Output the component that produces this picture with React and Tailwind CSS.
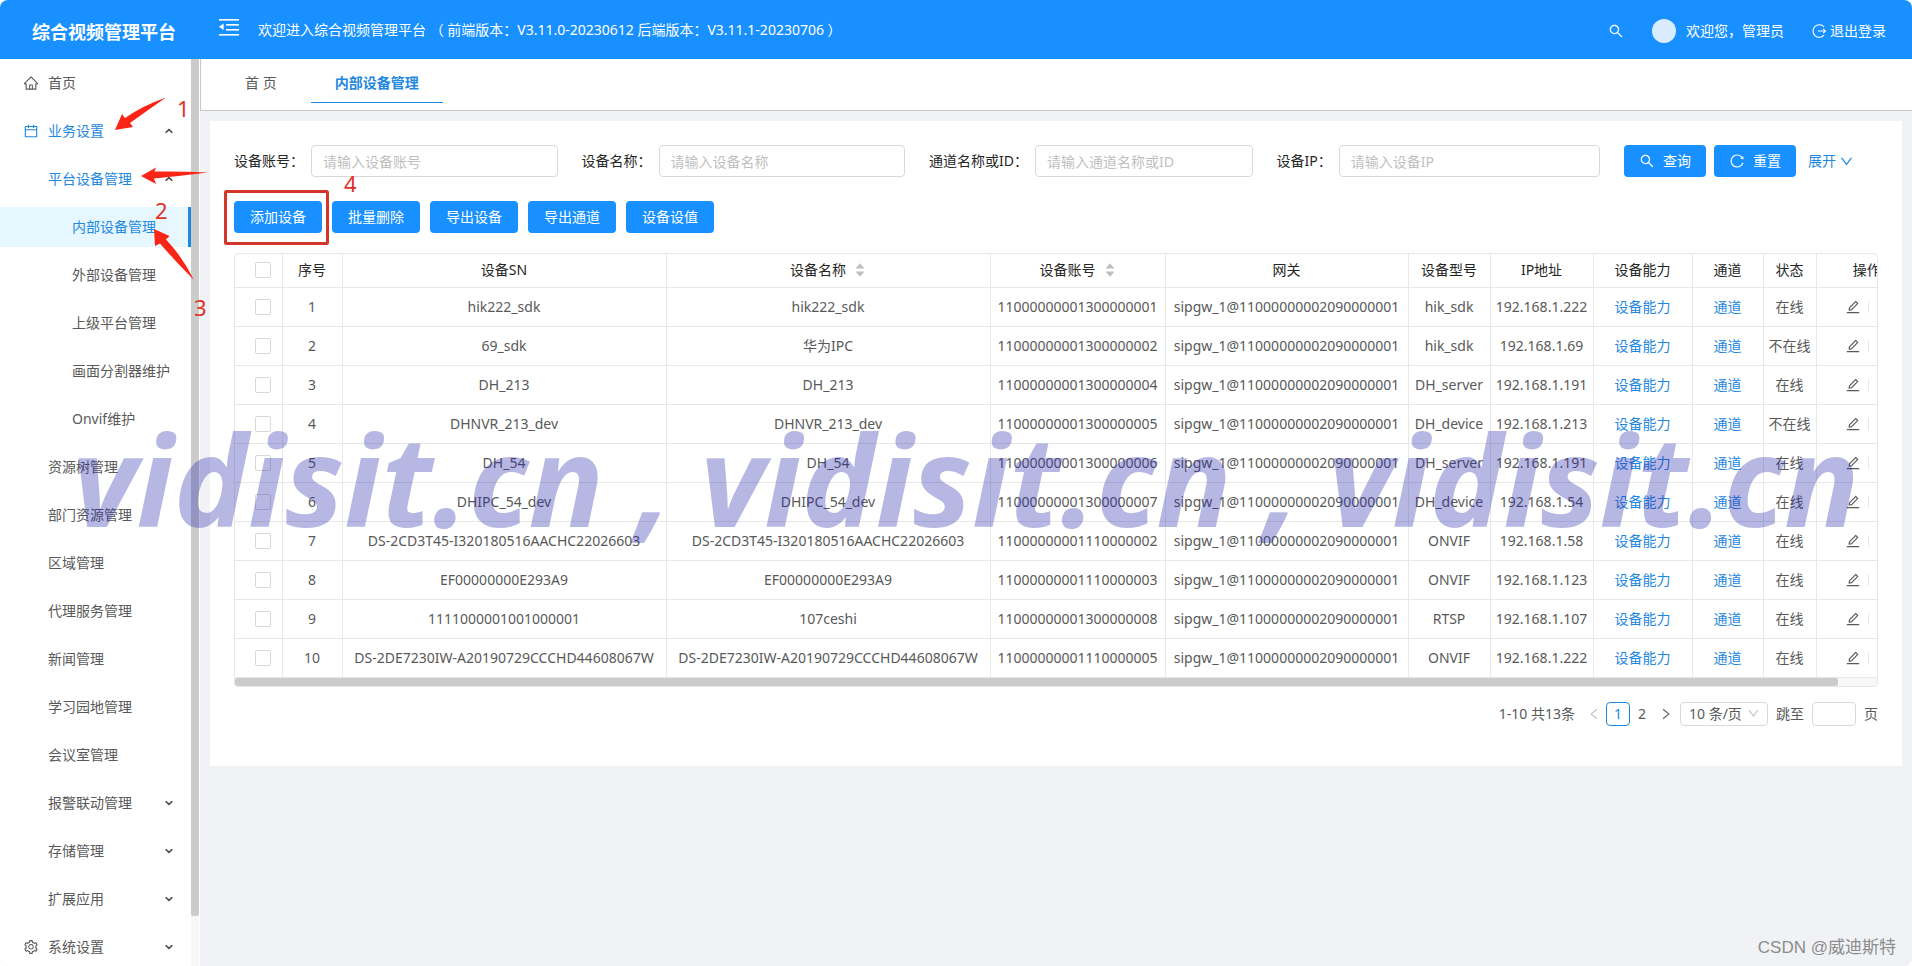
import { useState } from 'react';
import {
  AiOutlineHome,
  AiOutlineCalendar,
  AiOutlineSetting,
  AiOutlineSearch,
  AiOutlineReload,
  AiOutlineDown,
  AiOutlineLeft,
  AiOutlineRight,
  AiOutlineEdit,
  AiFillCaretUp,
  AiFillCaretDown
} from 'react-icons/ai';

const MENU = [
  { label: '首页', icon: AiOutlineHome },
  { label: '业务设置', icon: AiOutlineCalendar, arrow: 'up', open: true },
  { label: '平台设备管理', arrow: 'up', open: true },
  { label: '内部设备管理', level: 2, active: true },
  { label: '外部设备管理', level: 2 },
  { label: '上级平台管理', level: 2 },
  { label: '画面分割器维护', level: 2 },
  { label: 'Onvif维护', level: 2 },
  { label: '资源树管理' },
  { label: '部门资源管理' },
  { label: '区域管理' },
  { label: '代理服务管理' },
  { label: '新闻管理' },
  { label: '学习园地管理' },
  { label: '会议室管理' },
  { label: '报警联动管理', arrow: 'down' },
  { label: '存储管理', arrow: 'down' },
  { label: '扩展应用', arrow: 'down' },
  { label: '系统设置', icon: AiOutlineSetting, arrow: 'down' }
];

const FIELDS = [
  { id: 'account', label: '设备账号：', placeholder: '请输入设备账号' },
  { id: 'name', label: '设备名称：', placeholder: '请输入设备名称' },
  { id: 'channel', label: '通道名称或ID：', placeholder: '请输入通道名称或ID' },
  { id: 'ip', label: '设备IP：', placeholder: '请输入设备IP' }
];

const ACTIONS = ['添加设备', '批量删除', '导出设备', '导出通道', '设备设值'];

const GATEWAY = 'sipgw_1@11000000002090000001';

const ROWS = [
  { sn: 'hik222_sdk', name: 'hik222_sdk', account: '11000000001300000001', type: 'hik_sdk', ip: '192.168.1.222', status: '在线' },
  { sn: '69_sdk', name: '华为IPC', account: '11000000001300000002', type: 'hik_sdk', ip: '192.168.1.69', status: '不在线' },
  { sn: 'DH_213', name: 'DH_213', account: '11000000001300000004', type: 'DH_server', ip: '192.168.1.191', status: '在线' },
  { sn: 'DHNVR_213_dev', name: 'DHNVR_213_dev', account: '11000000001300000005', type: 'DH_device', ip: '192.168.1.213', status: '不在线' },
  { sn: 'DH_54', name: 'DH_54', account: '11000000001300000006', type: 'DH_server', ip: '192.168.1.191', status: '在线' },
  { sn: 'DHIPC_54_dev', name: 'DHIPC_54_dev', account: '11000000001300000007', type: 'DH_device', ip: '192.168.1.54', status: '在线' },
  { sn: 'DS-2CD3T45-I320180516AACHC22026603', name: 'DS-2CD3T45-I320180516AACHC22026603', account: '11000000001110000002', type: 'ONVIF', ip: '192.168.1.58', status: '在线' },
  { sn: 'EF00000000E293A9', name: 'EF00000000E293A9', account: '11000000001110000003', type: 'ONVIF', ip: '192.168.1.123', status: '在线' },
  { sn: '1111000001001000001', name: '107ceshi', account: '11000000001300000008', type: 'RTSP', ip: '192.168.1.107', status: '在线' },
  { sn: 'DS-2DE7230IW-A20190729CCCHD44608067W', name: 'DS-2DE7230IW-A20190729CCCHD44608067W', account: '11000000001110000005', type: 'ONVIF', ip: '192.168.1.222', status: '在线' }
];

function FoldIcon() {
  return (
    <svg width="20" height="20" viewBox="0 0 20 20" fill="#fff" aria-hidden="true">
      <rect x="0" y="1" width="20" height="1.6" />
      <rect x="7" y="6" width="13" height="1.6" />
      <rect x="7" y="11" width="13" height="1.6" />
      <rect x="0" y="16" width="20" height="1.6" />
      <path d="M4.6 5.6v6.4L0 8.8z" />
    </svg>
  );
}

function LogoutIcon() {
  return (
    <svg width="14" height="14" viewBox="0 0 14 14" fill="none" stroke="#fff" strokeWidth="1.1" aria-hidden="true">
      <path d="M12 2.8A6.3 6.3 0 1 0 12 11.2M6 7h7.2M11.2 4.9L13.4 7l-2.2 2.1" />
    </svg>
  );
}

function MenuArrow({ dir }) {
  return (
    <svg width="8" height="6" viewBox="0 0 8 6" fill="none" stroke="#4a4a4a" strokeWidth="1.6" aria-hidden="true">
      <path d={dir === 'up' ? 'M0.7 4.8L4 1.6L7.3 4.8' : 'M0.7 1.2L4 4.4L7.3 1.2'} />
    </svg>
  );
}

function Sorter() {
  return (
    <span className="ml-2 inline-flex flex-col text-[#bfbfbf]">
      <AiFillCaretUp size={12} className="-mb-1" />
      <AiFillCaretDown size={12} />
    </span>
  );
}

function Sidebar() {
  return (
    <aside className="flex w-[200px] shrink-0 overflow-hidden bg-white">
      <nav className="min-w-0 flex-1 pt-1">
        {MENU.map((item) => (
          <a
            key={item.label}
            href="#"
            className={`mb-2 flex h-10 items-center pr-[18px] ${
              item.active ? 'border-r-3 border-[#1f88e0] bg-[#e6f7ff] text-[#1f88e0]' : item.open ? 'text-[#1f88e0]' : 'text-[#595959]'
            } ${item.level === 2 ? 'pl-[72px]' : item.icon ? 'pl-[23px]' : 'pl-12'}`}
          >
            {item.icon && <item.icon size={16} className="mr-[9px]" />}
            <span className="flex-1 whitespace-nowrap">{item.label}</span>
            {item.arrow && <MenuArrow dir={item.arrow} />}
          </a>
        ))}
      </nav>
      <div className="w-2 bg-[#f7f7f7]">
        <div className="h-[857px] rounded-b-xs bg-[#cbcbcb]" />
      </div>
      <div className="w-px bg-white" />
    </aside>
  );
}

function SearchForm() {
  return (
    <form className="-mx-3 flex" onSubmit={(e) => e.preventDefault()}>
      {FIELDS.map((field) => (
        <div key={field.id} className="flex w-5/24 items-center px-3">
          <label htmlFor={field.id} className="mr-[7px] whitespace-nowrap text-[#262626]">{field.label}</label>
          <input
            id={field.id}
            type="text"
            placeholder={field.placeholder}
            className="h-8 min-w-0 flex-1 rounded border border-[#d9d9d9] px-[11px] placeholder:text-[#bfbfbf]"
          />
        </div>
      ))}
      <div className="flex items-center whitespace-nowrap pl-3">
        <button type="submit" className="flex h-8 w-[82px] items-center justify-center gap-2 rounded bg-[#1890ff] text-white">
          <AiOutlineSearch size={16} />
          查询
        </button>
        <button type="reset" className="ml-2 flex h-8 w-[82px] items-center justify-center gap-2 rounded bg-[#1890ff] text-white">
          <AiOutlineReload size={16} />
          重置
        </button>
        <a href="#" className="ml-3 flex items-center gap-[3px] text-[#1f88e0]">
          展开
          <AiOutlineDown size={15} />
        </a>
      </div>
    </form>
  );
}

function CheckBox({ label }) {
  return (
    <input
      type="checkbox"
      aria-label={label}
      className="ml-5 block size-4 appearance-none rounded-xs border border-[#d9d9d9] bg-white"
    />
  );
}

function DeviceTable() {
  return (
    <div className="mt-5 overflow-hidden rounded border border-[#e8e8e8]">
      <div className="overflow-hidden">
        <table className="w-full min-w-[1683px] table-fixed text-center whitespace-nowrap">
          <colgroup>
            <col className="w-[47px]" />
            <col className="w-[60px]" />
            <col className="w-[324px]" />
            <col className="w-[324px]" />
            <col className="w-[175px]" />
            <col className="w-[243px]" />
            <col className="w-[82px]" />
            <col className="w-[103px]" />
            <col className="w-[99px]" />
            <col className="w-[71px]" />
            <col className="w-[53px]" />
            <col />
          </colgroup>
          <thead>
            <tr className="h-[33px] text-[#262626] [&>th]:border-r [&>th]:border-b [&>th]:border-[#e8e8e8] [&>th]:font-normal">
              <th><CheckBox label="全选" /></th>
              <th>序号</th>
              <th>设备SN</th>
              <th><span className="inline-flex items-center">设备名称<Sorter /></span></th>
              <th><span className="inline-flex items-center">设备账号<Sorter /></span></th>
              <th>网关</th>
              <th>设备型号</th>
              <th>IP地址</th>
              <th>设备能力</th>
              <th>通道</th>
              <th>状态</th>
              <th>操作</th>
            </tr>
          </thead>
          <tbody>
            {ROWS.map((row, i) => (
              <tr key={row.account} className="h-[39px] [&>td]:border-r [&>td]:border-b [&>td]:border-[#e8e8e8]">
                <td><CheckBox label={row.sn} /></td>
                <td>{i + 1}</td>
                <td>{row.sn}</td>
                <td>{row.name}</td>
                <td>{row.account}</td>
                <td>{GATEWAY}</td>
                <td>{row.type}</td>
                <td>{row.ip}</td>
                <td><a href="#" className="text-[#1f88e0]">设备能力</a></td>
                <td><a href="#" className="text-[#1f88e0]">通道</a></td>
                <td>{row.status}</td>
                <td>
                  <div className="flex items-center pl-7">
                    <button type="button" aria-label="编辑"><AiOutlineEdit size={16} /></button>
                    <span className="ml-[7px] h-3 w-px bg-[#e8e8e8]" />
                  </div>
                </td>
              </tr>
            ))}
          </tbody>
        </table>
      </div>
      <div className="h-2 bg-[#f7f7f7]">
        <div className="h-2 w-[97.6%] rounded-xs bg-[#cbcbcb]" />
      </div>
    </div>
  );
}

function Pagination() {
  const [size, setSize] = useState('10');
  return (
    <div className="mt-[15px] flex h-6 items-center justify-end gap-2">
      <span className="mr-[7px]">1-10 共13条</span>
      <button type="button" aria-label="上一页" className="flex w-2 justify-center text-[#bfbfbf]"><AiOutlineLeft size={14} className="shrink-0" /></button>
      <button type="button" className="h-6 w-6 rounded border border-[#1f88e0] text-[#1f88e0]">1</button>
      <button type="button" className="w-2">2</button>
      <button type="button" aria-label="下一页" className="ml-[6px] flex w-3 justify-center"><AiOutlineRight size={14} className="shrink-0" /></button>
      <span className="relative flex items-center">
        <select
          value={size}
          onChange={(e) => setSize(e.target.value)}
          aria-label="每页条数"
          className="h-6 w-[88px] appearance-none rounded border border-[#d9d9d9] pl-2"
        >
          <option value="10">10 条/页</option>
          <option value="20">20 条/页</option>
        </select>
        <AiOutlineDown size={13} className="pointer-events-none absolute right-2 text-[#bfbfbf]" />
      </span>
      <label htmlFor="jump">跳至</label>
      <input id="jump" type="text" className="h-6 w-11 rounded border border-[#d9d9d9] px-2" />
      <span>页</span>
    </div>
  );
}

// Red step marks that lie over the menu and the toolbar
function StepMarks() {
  return (
    <svg width="400" height="340" className="pointer-events-none absolute top-0 left-0" aria-hidden="true">
      <g fill="#f92516">
        <path d="M115 130L122 114L125 118Q142 106 166 97.500Q148 110 130 123L133 127Z" />
        <path d="M141 176L156 167.500L154.500 171.500Q180 171 208 172.500Q180 176 154 178.500L156 184Z" />
        <path d="M154 229L169.500 236L166 239.500Q182 256 194 280Q176 262 160 243.500L155 246Z" />
      </g>
      <rect x="225.500" y="191.500" width="102" height="52" rx="1" fill="none" stroke="#d3352b" strokeWidth="3" />
      <g fill="#e0322a" className="text-[22px]">
        <text x="177" y="117">1</text>
        <text x="155" y="219">2</text>
        <text x="194" y="316">3</text>
        <text x="344" y="192">4</text>
      </g>
    </svg>
  );
}

function Watermark() {
  return (
    <div className="pointer-events-none absolute inset-x-0 top-[399px] flex justify-center gap-7 pl-5 whitespace-pre font-['Open_Sans'] text-[125px] leading-[160px] font-bold text-[#2525aa]/33 italic">
      <span>vidisit.cn ,</span>
      <span>vidisit.cn ,</span>
      <span>vidisit.cn</span>
    </div>
  );
}

export default function App() {
  return (
    <div className="relative flex min-h-screen flex-col overflow-hidden rounded-lg bg-[#f0f2f5] font-['Noto_Sans','Noto_Sans_CJK_SC',sans-serif] text-sm text-[#595959]">
      <header className="flex h-[59px] shrink-0 items-center bg-[#1890ff] text-white">
        <h1 className="w-[219px] pt-1 pl-8 text-lg font-bold">综合视频管理平台</h1>
        <button type="button" aria-label="收起菜单" className="pb-1"><FoldIcon /></button>
        <span className="ml-[19px] flex-1">欢迎进入综合视频管理平台 （ 前端版本：V3.11.0-20230612 后端版本：V3.11.1-20230706 ）</span>
        <div className="flex items-center pt-[3px]">
          <button type="button" aria-label="搜索"><AiOutlineSearch size={16} /></button>
          <span className="ml-7 size-6 rounded-full bg-[#d9ecff]" />
          <span className="ml-[10px]">欢迎您，管理员</span>
          <a href="#" className="mr-[26px] ml-7 flex items-center gap-1">
            <LogoutIcon />
            退出登录
          </a>
        </div>
      </header>
      <div className="flex h-[907px]">
        <Sidebar />
        <main className="min-w-0 flex-1">
          <div className="flex h-[52px] border-b border-l border-[#c8c8c8] bg-white">
            <a href="#" className="flex h-[44px] items-center pt-1 pr-[34px] pl-11">首 页</a>
            <a href="#" className="flex h-[44px] w-[132px] items-center justify-center border-b border-[#1f88e0] pt-1 font-bold text-[#1f88e0]">内部设备管理</a>
          </div>
          <section className="mx-[10px] mt-[10px] bg-white p-6 pb-10">
            <SearchForm />
            <div className="mt-6 flex gap-[10px]">
              {ACTIONS.map((action) => (
                <button key={action} type="button" className="h-8 rounded bg-[#1890ff] px-4 text-white">{action}</button>
              ))}
            </div>
            <DeviceTable />
            <Pagination />
          </section>
        </main>
      </div>
      <Watermark />
      <StepMarks />
      <div className="absolute right-4 bottom-[6px] font-['Liberation_Sans','Noto_Sans_CJK_SC',sans-serif] text-[17px] text-[#8c8c8c]">CSDN @威迪斯特</div>
    </div>
  );
}
